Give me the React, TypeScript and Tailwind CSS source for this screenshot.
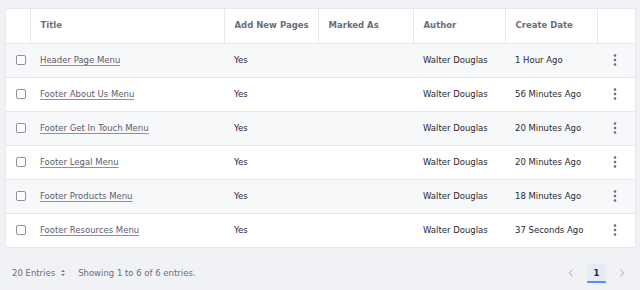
import React from 'react';

const rows = [
  { title: 'Header Page Menu', date: '1 Hour Ago' },
  { title: 'Footer About Us Menu', date: '56 Minutes Ago' },
  { title: 'Footer Get In Touch Menu', date: '20 Minutes Ago' },
  { title: 'Footer Legal Menu', date: '20 Minutes Ago' },
  { title: 'Footer Products Menu', date: '18 Minutes Ago' },
  { title: 'Footer Resources Menu', date: '37 Seconds Ago' },
];

const Kebab: React.FC = () => (
  <svg width="4" height="12" viewBox="0 0 4 12" className="inline-block">
    <circle cx="2" cy="1.5" r="1.3" fill="#6b6c7e" />
    <circle cx="2" cy="6" r="1.3" fill="#6b6c7e" />
    <circle cx="2" cy="10.5" r="1.3" fill="#6b6c7e" />
  </svg>
);

const App: React.FC = () => {
  const th = "h-[34px] px-[10px] text-left align-middle font-bold whitespace-nowrap text-[#6b6c7e] border-l border-[#e7e7ed]";
  const td = "h-[34px] px-[10px] align-middle whitespace-nowrap text-[#272833]";

  return (
    <div className="w-[640px] h-[290px] bg-[#f1f2f5] pt-[8px] text-[8.5px]" style={{ fontFamily: '"DejaVu Sans", sans-serif' }}>
      <div className="ml-[5px] mr-[4px] bg-white border border-[#e7e7ed] rounded-[2px] overflow-hidden">
        <table className="w-full table-fixed border-collapse">
          <colgroup>
            <col className="w-[24px]" />
            <col className="w-[194px]" />
            <col className="w-[94px]" />
            <col className="w-[95px]" />
            <col className="w-[92px]" />
            <col className="w-[92px]" />
            <col />
          </colgroup>
          <thead>
            <tr className="border-b border-[#e7e7ed]">
              <th className="h-[34px]"></th>
              <th className={th}>Title</th>
              <th className={th}>Add New Pages</th>
              <th className={th}>Marked As</th>
              <th className={th}>Author</th>
              <th className={th}>Create Date</th>
              <th className={th}></th>
            </tr>
          </thead>
          <tbody>
            {rows.map((r, i) => (
              <tr key={r.title} className={`${i < rows.length - 1 ? 'border-b border-[#e7e7ed]' : ''} ${i % 2 === 0 ? 'bg-[#f7f8f9]' : 'bg-white'}`}>
                <td className="h-[34px] align-middle">
                  <div className="ml-[10px] w-[10px] h-[10px] rounded-[2px] border border-[#8f909c] bg-white" />
                </td>
                <td className={td}>
                  <a className="text-[#5b5c6e] underline decoration-[#8f909c] underline-offset-2">{r.title}</a>
                </td>
                <td className={td}>Yes</td>
                <td className={td}></td>
                <td className={td}>Walter Douglas</td>
                <td className={td}>{r.date}</td>
                <td className={`${td} text-right pr-[18px]`}><Kebab /></td>
              </tr>
            ))}
          </tbody>
        </table>
      </div>
      <div className="flex items-center h-[36px] mt-[7px] pl-[12px] pr-[14px] text-[#6b6c7e]">
        <span>20 Entries</span>
        <svg width="6" height="8" viewBox="0 0 6 8" className="ml-[5px]">
          <path d="M1 3 L3 1 L5 3 Z" fill="#6b6c7e" />
          <path d="M1 5 L3 7 L5 5 Z" fill="#6b6c7e" />
        </svg>
        <span className="ml-[12px]">Showing 1 to 6 of 6 entries.</span>
        <div className="ml-auto flex items-center">
          <svg width="8" height="10" viewBox="0 0 8 10">
            <path d="M5.5 1.5 L2.5 5 L5.5 8.5" stroke="#a7a9bc" strokeWidth="1" fill="none" />
          </svg>
          <div className="ml-[12px] w-[19px] h-[19px] bg-[#e6ebf5] relative flex items-center justify-center rounded-[2px] font-bold text-[#272833]">
            1
            <div className="absolute left-0 right-0 bottom-0 h-[2px] bg-[#528eff] rounded-[1px]" />
          </div>
          <svg width="8" height="10" viewBox="0 0 8 10" className="ml-[12px]">
            <path d="M2.5 1.5 L5.5 5 L2.5 8.5" stroke="#a7a9bc" strokeWidth="1" fill="none" />
          </svg>
        </div>
      </div>
    </div>
  );
};

export default App;
